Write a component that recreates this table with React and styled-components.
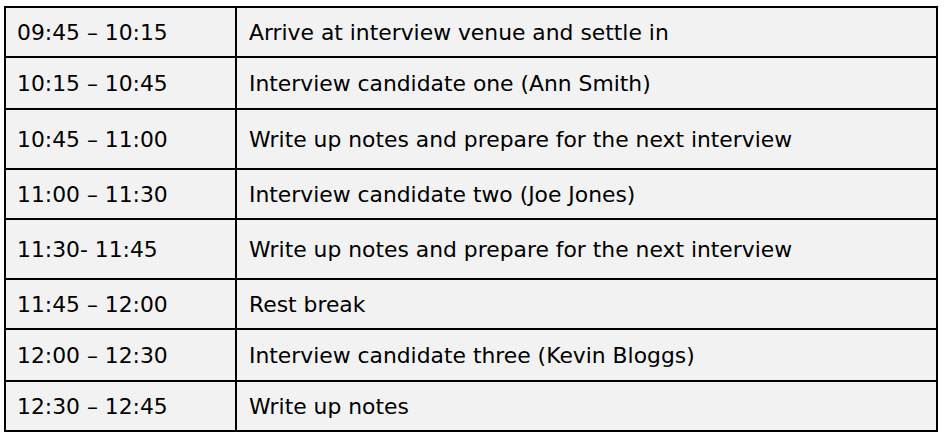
import React from 'react'
import styled, { createGlobalStyle } from 'styled-components'

const GlobalStyle = createGlobalStyle`
  html, body {
    margin: 0;
    padding: 0;
    background: #ffffff;
  }
  body {
    font-family: "DejaVu Sans", Verdana, sans-serif;
  }
`

const schedule = [
  { time: '09:45 – 10:15', task: 'Arrive at interview venue and settle in', height: 50 },
  { time: '10:15 – 10:45', task: 'Interview candidate one (Ann Smith)', height: 52 },
  { time: '10:45 – 11:00', task: 'Write up notes and prepare for the next interview', height: 60 },
  { time: '11:00 – 11:30', task: 'Interview candidate two (Joe Jones)', height: 50 },
  { time: '11:30- 11:45', task: 'Write up notes and prepare for the next interview', height: 60 },
  { time: '11:45 – 12:00', task: 'Rest break', height: 50 },
  { time: '12:00 – 12:30', task: 'Interview candidate three (Kevin Bloggs)', height: 52 },
  { time: '12:30 – 12:45', task: 'Write up notes', height: 50 },
]

export default function App() {
  return (
    <>
      <GlobalStyle />
      <Page>
        <Schedule>
          {schedule.map((row, idx) => (
            <React.Fragment key={idx}>
              <Cell $h={row.height} $pad={11}>{row.time}</Cell>
              <Cell $h={row.height} $pad={12}>{row.task}</Cell>
            </React.Fragment>
          ))}
        </Schedule>
      </Page>
    </>
  )
}

const Page = styled.div`
  padding: 6px 0 0 4px;
`;

const Schedule = styled.div`
  display: grid;
  grid-template-columns: 231px 701px;
  width: 934px;
  box-sizing: border-box;
  border-top: 2px solid #000;
  border-left: 2px solid #000;
  background-color: #f2f2f2;
`;

const Cell = styled.div`
  box-sizing: border-box;
  height: ${p => p.$h}px;
  display: flex;
  align-items: center;
  padding-left: ${p => p.$pad}px;
  border-right: 2px solid #000;
  border-bottom: 2px solid #000;
  font-size: 21.85px;
  color: #000;
  white-space: nowrap;
`;
